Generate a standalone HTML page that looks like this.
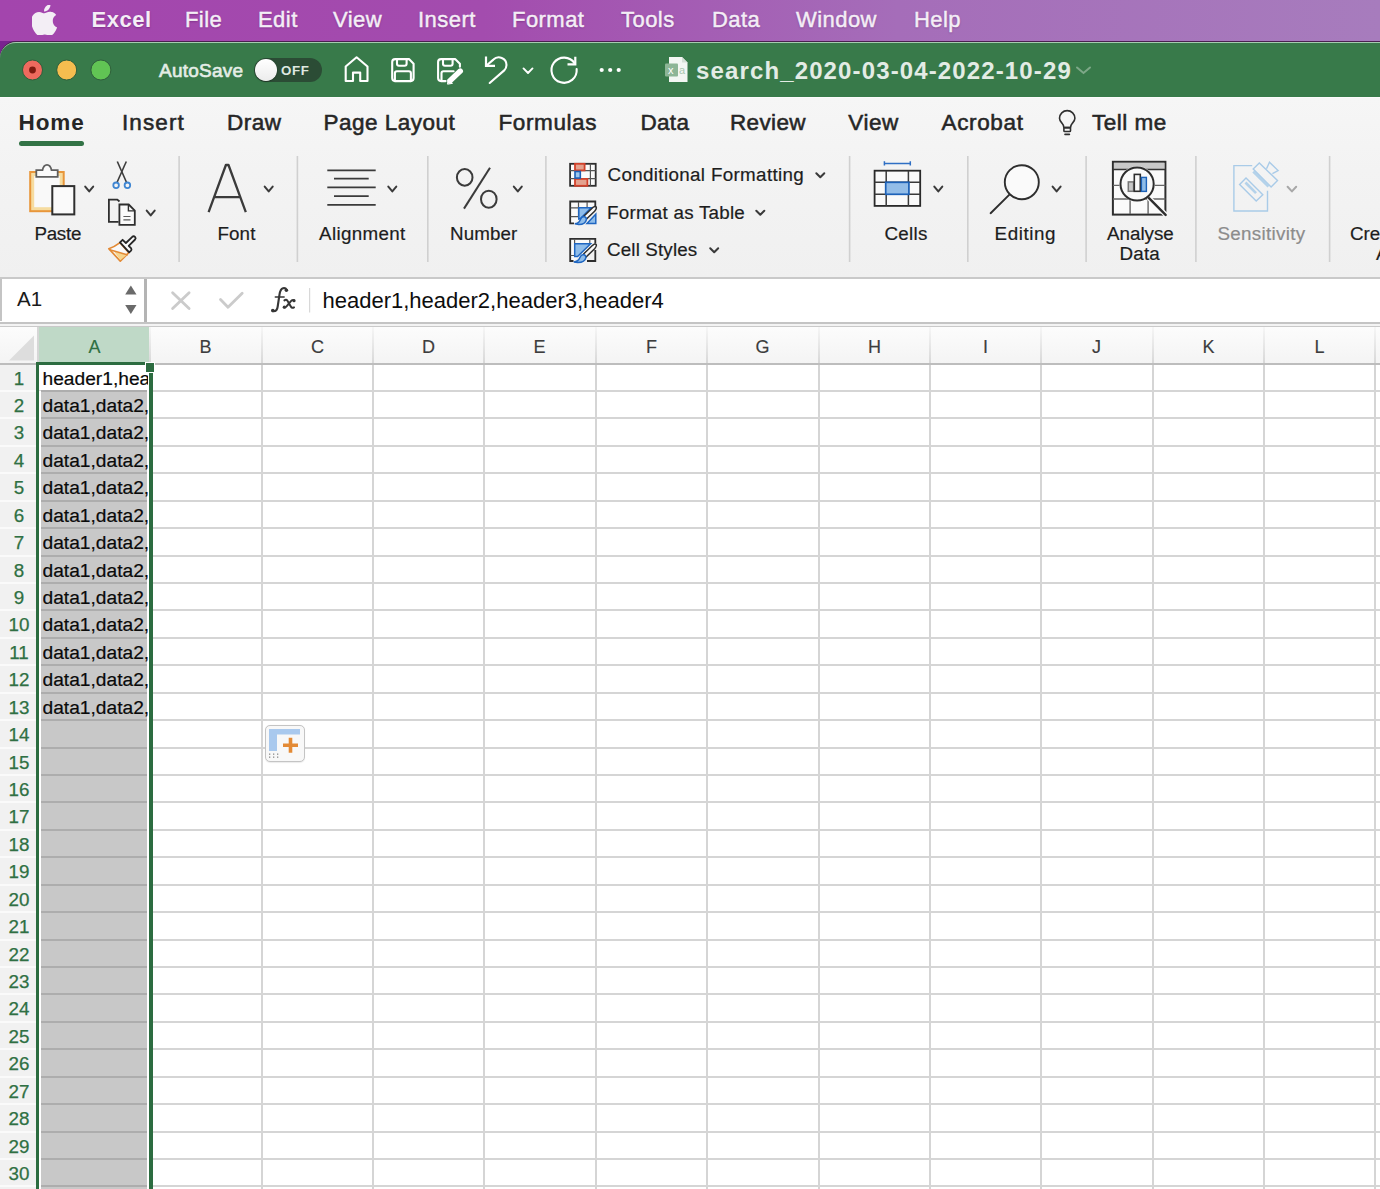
<!DOCTYPE html>
<html><head><meta charset="utf-8">
<style>
*{box-sizing:border-box;margin:0;padding:0}
html,body{width:1380px;height:1189px;overflow:hidden;background:#fff;font-family:"Liberation Sans",sans-serif;}
.a{position:absolute}
.t{position:absolute;white-space:nowrap;line-height:1}
#menubar{left:0;top:0;width:1380px;height:43px;background:linear-gradient(90deg,#a345ad 0%,#a34cae 35%,#a56db9 65%,#a77cbd 100%)}
#menubar .t{color:#f4eef6;font-size:22px;top:9px;text-shadow:0 1px 2px rgba(60,0,70,.35);-webkit-text-stroke:0.45px #f4eef6;letter-spacing:0.45px}
#titlebar{left:0;top:42px;width:1380px;height:56px;background:#387a4a;border-top-left-radius:16px;border-top:1px solid #a5cbb0;box-shadow:0 -1px 0 #4a2050}
#ribbon{left:0;top:97px;width:1380px;height:181px;background:linear-gradient(#f6f6f6,#f3f3f3 40%,#f0f0f0);border-top:1.5px solid #fbfbfb}
.tab{position:absolute;top:112px;font-size:22.5px;color:#262626;white-space:nowrap;line-height:1;-webkit-text-stroke:0.55px #262626}
.lbl{position:absolute;top:225px;font-size:18.8px;color:#1d1d1d;white-space:nowrap;line-height:1;-webkit-text-stroke:0.2px currentColor}
.sep{position:absolute;top:156px;width:1.5px;height:106px;background:#cfcfcf}
.rl{position:absolute;left:0;width:1380px;height:2px;background:#d5d5d5}
.cl{position:absolute;top:327px;width:2px;height:862px;background:#d5d5d5}
.rn{position:absolute;left:0;width:38px;text-align:center;font-size:18.8px;color:#2f7043;line-height:1;-webkit-text-stroke:0.25px #2f7043}
.ch{position:absolute;top:338px;font-size:18px;color:#4d4d4d;line-height:1;text-align:center;width:111px;-webkit-text-stroke:0.15px currentColor}
.ct{position:absolute;left:42.5px;font-size:19.2px;color:#0a0a0a;line-height:1.2;white-space:nowrap;overflow:hidden;width:105px;-webkit-text-stroke:0.2px #0a0a0a}
</style></head><body>
<!-- MENU BAR -->
<div id="menubar" class="a">
<svg class="a" style="left:31.5px;top:4.5px" width="28" height="30" viewBox="0 0 24 24" >
<g transform="translate(-1.6,0) scale(1.13)" style="transform-origin:12px 12px">
<path fill="#f3eef5" d="M12.152 6.896c-.948 0-2.415-1.078-3.96-1.04-2.04.027-3.91 1.183-4.961 3.014-2.117 3.675-.546 9.103 1.519 12.09 1.013 1.454 2.208 3.09 3.792 3.039 1.52-.065 2.09-.987 3.935-.987 1.831 0 2.35.987 3.96.948 1.637-.026 2.676-1.48 3.676-2.948 1.156-1.688 1.636-3.325 1.662-3.415-.039-.013-3.182-1.221-3.22-4.857-.026-3.04 2.48-4.494 2.597-4.559-1.429-2.09-3.623-2.324-4.39-2.376-2-.156-3.675 1.09-4.61 1.09zM15.53 3.83c.843-1.012 1.4-2.427 1.245-3.83-1.207.052-2.662.805-3.532 1.818-.78.896-1.454 2.338-1.273 3.714 1.338.104 2.715-.688 3.559-1.701"/>
</g></svg>
  <div class="t" style="left:91.5px;font-weight:bold;letter-spacing:0.5px;-webkit-text-stroke:0">Excel</div>
  <div class="t" style="left:185px;letter-spacing:0.4px">File</div>
  <div class="t" style="left:258px">Edit</div>
  <div class="t" style="left:333px">View</div>
  <div class="t" style="left:418px">Insert</div>
  <div class="t" style="left:512px">Format</div>
  <div class="t" style="left:621px">Tools</div>
  <div class="t" style="left:712px">Data</div>
  <div class="t" style="left:796px">Window</div>
  <div class="t" style="left:914px">Help</div>
</div>
<div class="a" style="left:0;top:41px;width:1380px;height:2px;background:#6b2c78"></div>
<!-- TITLE BAR -->
<div class="a" style="left:0;top:41px;width:20px;height:20px;background:#7a2390"></div>
<div id="titlebar" class="a"></div>
<!-- TITLE CONTENT -->
<svg class="a" style="left:0;top:43px" width="140" height="55">
  <circle cx="32.5" cy="27" r="10" fill="#ee6a5e" stroke="#2f5f3b" stroke-width="1"/>
  <circle cx="32.5" cy="27" r="3.4" fill="#7e1a10"/>
  <circle cx="66.7" cy="27" r="10" fill="#f5bd4f" stroke="#2f5f3b" stroke-width="1"/>
  <circle cx="100.9" cy="27" r="10" fill="#61c454" stroke="#2f5f3b" stroke-width="1"/>
</svg>
<div class="t" style="left:159px;top:61px;font-size:19px;color:#e4ede6;-webkit-text-stroke:0.65px #e4ede6;letter-spacing:0.25px">AutoSave</div>
<div class="a" style="left:254px;top:58px;width:68px;height:23.5px;border-radius:12px;background:#2b4c35"></div>
<div class="a" style="left:255px;top:59px;width:21.5px;height:21.5px;border-radius:50%;background:linear-gradient(#ffffff,#ececec);box-shadow:0 0.5px 1.5px rgba(0,0,0,.5)"></div>
<div class="t" style="left:281px;top:63.5px;font-size:13.3px;font-weight:bold;color:#dfe8e1;letter-spacing:0.6px">OFF</div>
<svg class="a" style="left:330px;top:45px" width="380" height="50" fill="none" stroke="#ffffff" stroke-width="2.1" stroke-linejoin="round" stroke-linecap="round">
  <!-- home -->
  <path d="M15.7 36 V21.5 L26.6 12.3 L37.5 21.5 V36 H30.2 V27.6 H23 V36 Z"/>
  <!-- save -->
  <path d="M65.2 14.1 H79 L83.6 18.7 V33.1 Q83.6 36.1 80.6 36.1 H65.2 Q62.2 36.1 62.2 33.1 V17.1 Q62.2 14.1 65.2 14.1 Z"/>
  <path d="M67 14.1 V18.8 Q67 20.8 69 20.8 H74.6 Q76.6 20.8 76.6 18.8 V14.1"/>
  <path d="M64.9 36.1 V28.3 Q64.9 26.3 66.9 26.3 H78.9 Q80.9 26.3 80.9 28.3 V36.1"/>
  <!-- save edit -->
  <path d="M115.6 36.1 H111.1 Q108.1 36.1 108.1 33.1 V17.1 Q108.1 14.1 111.1 14.1 H125.1 L129.9 18.7 V21.8"/>
  <path d="M113 14.1 V18.8 Q113 20.8 115 20.8 H120.6 Q122.6 20.8 122.6 18.8 V14.1"/>
  <path d="M111.5 35.6 V28.3 Q111.5 26.3 113.5 26.3 H123.6"/>
  <path d="M120 35.8 L130.3 26" stroke-width="5.4" stroke-linecap="round"/>
  <path d="M117.6 38.8 L118.2 34.2 L122.2 38.1 Z" fill="#fff" stroke-width="1"/>
  <!-- undo -->
  <path d="M156 11.5 V20.9 H165" stroke-width="2.2" stroke-linecap="butt" stroke-linejoin="miter"/>
  <path d="M156.8 20.3 L163.4 14.6 A7.7 7.7 0 0 1 176.5 20 A7.7 7.7 0 0 1 174.2 25.4 L159.7 38"/>
  <!-- chevron -->
  <path d="M193.5 23.4 L198 28 L202.5 23.4" stroke-width="1.9"/>
  <!-- redo -->
  <path d="M246.65 24.1 A12.6 12.6 0 1 1 244.67 18.34"/>
  <path d="M237.5 19.3 H245.3 V11.7" stroke-width="2.2" stroke-linecap="butt" stroke-linejoin="miter"/>
  <!-- dots -->
  <circle cx="271.7" cy="25" r="2.1" fill="#fff" stroke="none"/>
  <circle cx="280.2" cy="25" r="2.1" fill="#fff" stroke="none"/>
  <circle cx="288.7" cy="25" r="2.1" fill="#fff" stroke="none"/>
</svg>
<svg class="a" style="left:660px;top:52px" width="32" height="36">
  <path d="M9 5 H22 L27.5 10.5 V30 H9 Z" fill="#f3f6f3"/>
  <path d="M22 5 V10.5 H27.5" fill="#d5dfd7"/>
  <rect x="5" y="11.5" width="13" height="13" rx="1" fill="#8db596"/>
  <text x="8" y="22" font-family="Liberation Sans" font-size="11" fill="#ffffff">x</text>
  <text x="19" y="22" font-family="Liberation Sans" font-size="11" fill="#a9c8b0">a</text>
</svg>
<div class="t" style="left:696px;top:59px;font-size:24px;font-weight:bold;color:#e3ece5;letter-spacing:1.13px">search_2020-03-04-2022-10-29</div>
<svg class="a" style="left:1074px;top:64px" width="20" height="12"><path d="M3 3.5 L9.5 9 L16 3.5" fill="none" stroke="#7ea888" stroke-width="2" stroke-linecap="round"/></svg>

<!-- RIBBON -->
<div id="ribbon" class="a"></div>
<!-- TABS -->
<div class="tab" style="left:18.5px;font-weight:bold;-webkit-text-stroke:0;letter-spacing:0.9px">Home</div>
<div class="a" style="left:19px;top:141px;width:65px;height:4.5px;border-radius:3px;background:#337346"></div>
<div class="tab" style="left:122px;letter-spacing:1.1px">Insert</div>
<div class="tab" style="left:227px;letter-spacing:0.5px">Draw</div>
<div class="tab" style="left:323.5px;letter-spacing:0.5px">Page Layout</div>
<div class="tab" style="left:498.5px;letter-spacing:0.6px">Formulas</div>
<div class="tab" style="left:640.5px;letter-spacing:0.3px">Data</div>
<div class="tab" style="left:730px;letter-spacing:0.35px">Review</div>
<div class="tab" style="left:848.3px;letter-spacing:0.5px">View</div>
<div class="tab" style="left:941.5px;letter-spacing:0.65px">Acrobat</div>
<div class="tab" style="left:1092px;letter-spacing:0.5px">Tell me</div>
<svg class="a" style="left:1054px;top:106px" width="26" height="34" fill="none" stroke="#2f2f2f" stroke-width="1.6" stroke-linecap="round" stroke-linejoin="round">
  <path d="M9.9 21.6 Q9.7 19.2 7.9 17.1 Q5.5 14.6 5.5 12.3 A7.7 7.7 0 0 1 20.9 12.3 Q20.9 14.6 18.5 17.1 Q16.7 19.2 16.5 21.6 Z"/>
  <rect x="9.9" y="21.6" width="6.6" height="3.9" rx="0.8"/>
  <path d="M11 28.4 H15.4"/>
</svg>

<div class="a" style="left:0;top:277px;width:1380px;height:2px;background:#c9c9c9"></div>
<!-- RIBBON ICONS -->
<svg class="a" style="left:0;top:0" width="1380" height="278" fill="none" stroke-linejoin="miter">
  <!-- separators -->
  <g fill="#d0d0d0">
    <rect x="178.3" y="156" width="1.6" height="106"/>
    <rect x="296.6" y="156" width="1.6" height="106"/>
    <rect x="427" y="156" width="1.6" height="106"/>
    <rect x="545.1" y="156" width="1.6" height="106"/>
    <rect x="848.8" y="156" width="1.6" height="106"/>
    <rect x="967" y="156" width="1.6" height="106"/>
    <rect x="1085.3" y="156" width="1.6" height="106"/>
    <rect x="1195.1" y="156" width="1.6" height="106"/>
    <rect x="1328.8" y="156" width="1.6" height="106"/>
  </g>
  <!-- PASTE clipboard -->
  <rect x="30.2" y="172" width="33.5" height="39.2" fill="#f6dca0" stroke="#e8963a" stroke-width="2"/>
  <rect x="34.2" y="176" width="25.5" height="31.2" fill="#f9f9f9"/>
  <path d="M36.3 176.8 V170.2 H42.5 Q43.5 164.8 47 164.8 Q50.5 164.8 51.5 170.2 H57.7 V176.8 Z" fill="#fafafa" stroke="#5f5f5f" stroke-width="1.8"/>
  <rect x="52.3" y="186.1" width="22" height="28.3" fill="#fafafa" stroke="#2f2f2f" stroke-width="2"/>
  <!-- chevrons -->
  <g stroke="#3a3a3a" stroke-width="2" stroke-linecap="round" stroke-linejoin="round">
    <path d="M85.2 186.6 L89.2 191.4 L93.2 186.6"/>
    <path d="M146.7 210.6 L150.7 215.4 L154.7 210.6"/>
    <path d="M264.7 186.6 L268.7 191.4 L272.7 186.6"/>
    <path d="M388.3 186.6 L392.3 191.4 L396.3 186.6"/>
    <path d="M513.8 186.6 L517.8 191.4 L521.8 186.6"/>
    <path d="M816.3 173.3 L820.3 177.3 L824.3 173.3"/>
    <path d="M756.3 210.8 L760.3 214.8 L764.3 210.8"/>
    <path d="M710.2 248.3 L714.2 252.3 L718.2 248.3"/>
    <path d="M934.3 186.6 L938.3 191.4 L942.3 186.6"/>
    <path d="M1052.6 186.6 L1056.6 191.4 L1060.6 186.6"/>
  </g>
  <path d="M1287.6 186.8 L1291.9 191.4 L1296.2 186.8" stroke="#a8a8a8" stroke-width="2" stroke-linecap="round" stroke-linejoin="round"/>
  <!-- scissors -->
  <g stroke="#3c3c3c" stroke-width="1.6">
    <path d="M117.3 161.5 L126.6 182.5"/>
    <path d="M126.3 161.5 L117 182.5"/>
  </g>
  <g stroke="#3f86d2" stroke-width="1.8">
    <circle cx="116.1" cy="185.3" r="2.8"/>
    <circle cx="127.4" cy="185.3" r="2.8"/>
  </g>
  <!-- copy -->
  <path d="M118.6 221.8 H108.9 V199.6 H117.3 L119.5 201.5" stroke="#2f2f2f" stroke-width="1.8"/>
  <path d="M119.4 204.5 H128.7 L134.8 210.6 V224.9 H119.4 Z" fill="#fafafa" stroke="#2f2f2f" stroke-width="1.8"/>
  <path d="M128.4 204.6 V210.9 H134.6" stroke="#2f2f2f" stroke-width="1.4"/>
  <path d="M123.4 216.5 H130.5 M123.4 219.8 H130.5" stroke="#5a5a5a" stroke-width="1.2"/>
  <!-- format painter brush -->
  <path d="M120 242.6 Q114.5 246.8 108.8 248.7 L120.3 261.2 L128.8 252.6 Z" fill="#f9f9f9" stroke="#e38a35" stroke-width="1.7" stroke-linejoin="round"/>
  <path d="M114.2 251.6 L120.3 260.2 L126.6 255 Z" fill="#f6d58e"/>
  <path d="M109.8 249.8 L127.8 255" stroke="#e38a35" stroke-width="1.5"/>
  <path d="M120 242.3 L122.6 239.8 L125.9 243 L132.3 236.8 Q133.7 235.6 135 236.9 Q136.3 238.2 135.1 239.5 L128.7 245.9 L131.2 248.4 Q131.9 249.6 131 250.6 L129.2 252.3 Z" fill="#fafafa" stroke="#262626" stroke-width="1.8" stroke-linejoin="round"/>
  <!-- FONT A -->
  <path d="M208.6 212.2 L225.9 165 H228.5 L245.8 212.2 M214.2 197.2 H240.2" stroke="#3b3b3b" stroke-width="2.3" stroke-linejoin="round"/>
  <!-- ALIGNMENT -->
  <g stroke="#3b3b3b" stroke-width="1.7">
    <path d="M327.3 170.3 H375.7 M334 178.7 H368.7 M327.3 187.4 H375.7 M334 196.1 H368.7 M327.3 204.8 H375.7"/>
  </g>
  <!-- NUMBER % -->
  <g stroke="#3b3b3b" stroke-width="2">
    <ellipse cx="464.7" cy="177.4" rx="7.8" ry="8.3"/>
    <ellipse cx="488.8" cy="199.2" rx="7.8" ry="8.5"/>
    <path d="M464 208.6 L490 167.7"/>
  </g>
  <!-- CONDITIONAL FORMATTING icon -->
  <rect x="570.1" y="163.8" width="25.6" height="22" fill="#fafafa" stroke="#2e2e2e" stroke-width="1.8"/>
  <path d="M590.4 163.8 V185.8 M570.1 170.6 H595.7 M570.1 178.6 H595.7" stroke="#555" stroke-width="1.2"/>
  <rect x="575" y="163.8" width="9.6" height="6.6" fill="#e3a28f" stroke="#d1412a" stroke-width="1.8"/>
  <rect x="575" y="178.9" width="12.4" height="6.9" fill="#e3a28f" stroke="#d1412a" stroke-width="1.8"/>
  <rect x="575" y="171.5" width="5.3" height="6.6" fill="#9cc6ee" stroke="#1d5fb5" stroke-width="1.6"/>
  <!-- FORMAT AS TABLE icon -->
  <path d="M574 223.3 H570.2 V201.5 H595.3 V206.3" stroke="#2e2e2e" stroke-width="1.8" fill="#fafafa"/>
  <path d="M578.5 202 V216 M587.1 202 V207.5 M570.6 207.8 H578.5 M570.6 216.6 H578" stroke="#555" stroke-width="1.2"/>
  <path d="M578.8 219 V207.7 H591.2 L580.5 218.5 Z" fill="#8fbdea" stroke="#1f66c1" stroke-width="1.5"/>
  <path d="M595.8 214.2 V223.5 H587 Z" fill="#8fbdea" stroke="#1f66c1" stroke-width="1.5"/>
  <path d="M583.8 216.3 L592.6 207.7 Q595.3 205.5 596.2 207 Q596.9 208.5 594.6 211.2 L586 219.5" fill="#fafafa" stroke="#2e2e2e" stroke-width="1.5"/>
  <path d="M574.8 223.8 Q579 223.5 580.3 219.8 Q581.3 216.8 584 216.6 Q586.5 217 586.4 219.7 Q585.5 224.5 578.8 224.6 Z" fill="#8fbdea" stroke="#1f66c1" stroke-width="1.5"/>
  <!-- CELL STYLES icon -->
  <path d="M573.5 261 H570.2 V238.9 H595.3 V243.5" stroke="#2e2e2e" stroke-width="1.8" fill="#fafafa"/>
  <path d="M587 261 H595.3 V250" stroke="#2e2e2e" stroke-width="1.8"/>
  <path d="M574.6 239.2 V243.5 M589.8 239.2 V243.5 M570.6 255.5 H574" stroke="#555" stroke-width="1.2"/>
  <path d="M574.7 256.5 V243.8 H590.6 L577.6 256.5 Z" fill="#8fbdea" stroke="#1f66c1" stroke-width="1.5"/>
  <path d="M583.3 254.3 L592.6 245.3 Q595.3 243.1 596.2 244.6 Q596.9 246.1 594.6 248.8 L585.6 257.5" fill="#fafafa" stroke="#2e2e2e" stroke-width="1.5"/>
  <path d="M573.8 262 Q578.5 261.5 579.8 257.8 Q580.8 254.8 583.5 254.6 Q586 255 585.9 257.7 Q585 262.5 577.8 262.6 Z" fill="#8fbdea" stroke="#1f66c1" stroke-width="1.5"/>
  <!-- CELLS icon -->
  <rect x="874.6" y="170.7" width="45.6" height="35.2" fill="#fafafa" stroke="#2a2a2a" stroke-width="1.8"/>
  <path d="M886.2 170.7 V205.9 M908.4 170.7 V205.9 M874.6 182.3 H920.2 M874.6 194.3 H920.2" stroke="#3a3a3a" stroke-width="1.5"/>
  <rect x="885.7" y="182.3" width="23.2" height="12" fill="#93bde8" stroke="#1d62b8" stroke-width="1.7"/>
  <path d="M884.4 163.4 H910.3 M884.4 161.3 V165.6 M910.3 161.3 V165.6" stroke="#2f6fc4" stroke-width="1.5"/>
  <!-- EDITING magnifier -->
  <circle cx="1021.8" cy="182.2" r="17" fill="#fafafa" stroke="#2e2e2e" stroke-width="1.9"/>
  <path d="M1009.4 194.6 L990.6 213.2" stroke="#2e2e2e" stroke-width="1.9" stroke-linecap="round"/>
  <!-- ANALYSE DATA icon -->
  <rect x="1112.9" y="161.8" width="52.5" height="52.8" fill="#fafafa" stroke="#2e2e2e" stroke-width="2"/>
  <rect x="1113.9" y="162.8" width="50.5" height="6.4" fill="#c9c9c9"/>
  <path d="M1113 169.5 H1165.4" stroke="#333" stroke-width="1.5"/>
  <path d="M1113 185.4 H1165.4 M1113 199 H1165.4 M1130.1 199 V214 M1148.1 199 V214" stroke="#666" stroke-width="1.4"/>
  <circle cx="1137.1" cy="184" r="17.8" fill="#fafafa"/>
  <path d="M1148.5 197.5 L1166.2 215.2" stroke="#fafafa" stroke-width="5"/>
  <circle cx="1137.1" cy="184" r="16.6" fill="#fafafa" stroke="#2e2e2e" stroke-width="2"/>
  <path d="M1149 198.2 L1165.6 214.9" stroke="#2e2e2e" stroke-width="2.4" stroke-linecap="round"/>
  <rect x="1128.3" y="181.9" width="5.3" height="9.4" fill="#c8c8c8" stroke="#777" stroke-width="1.5"/>
  <rect x="1134.3" y="174.4" width="6" height="16.9" fill="#fafafa" stroke="#2e2e2e" stroke-width="1.6"/>
  <rect x="1141.4" y="177.4" width="5" height="14" fill="#8fbde8" stroke="#1d62b8" stroke-width="1.4"/>
  <!-- SENSITIVITY icon -->
  <g stroke="#a9cbe8" stroke-width="1.4" fill="none">
    <path d="M1252.2 165.6 H1233.9 V211 H1267.5 V190.7"/>
    <path d="M1239.6 184.4 L1246 178 L1262.8 194.8 L1256.2 201.1 Z"/>
    <path d="M1253.2 169 L1259.3 163 L1277.5 180.6 L1271.1 187 Z"/>
    <path d="M1266.5 168.8 L1269.5 162.3 L1278.1 170.5 L1272.4 173.6"/>
  </g>
  <path d="M1244.5 183.5 L1246.4 181.6 L1257 192.2 L1255.1 194.1 Z" fill="#b4d2ea"/>
  <path d="M1252.3 172.6 L1254.3 170.6 L1269.6 185.4 L1267.5 187.5 Z" fill="#b4d2ea"/>
</svg>
<div class="lbl" style="left:34.5px;letter-spacing:-0.3px">Paste</div>
<div class="lbl" style="left:217.5px;letter-spacing:0.1px">Font</div>
<div class="lbl" style="left:319px;letter-spacing:0.35px">Alignment</div>
<div class="lbl" style="left:450px;letter-spacing:0.1px">Number</div>
<div class="lbl" style="left:884.5px;letter-spacing:0.3px">Cells</div>
<div class="lbl" style="left:994.5px;letter-spacing:0.6px">Editing</div>
<div class="lbl" style="left:1107px;letter-spacing:0px">Analyse</div>
<div class="lbl" style="left:1119.5px;top:245px;letter-spacing:0.2px">Data</div>
<div class="lbl" style="left:1217.5px;color:#8c8c8c;letter-spacing:0.3px">Sensitivity</div>
<div class="lbl" style="left:1350px">Cre</div>
<div class="lbl" style="left:1376px;top:245px">A</div>
<div class="lbl" style="left:607.5px;top:166px;letter-spacing:0.35px">Conditional Formatting</div>
<div class="lbl" style="left:607px;top:203.5px;letter-spacing:0.25px">Format as Table</div>
<div class="lbl" style="left:607px;top:241px;letter-spacing:0.15px">Cell Styles</div>
<!-- /RIBBON ICONS -->
<!-- FORMULA BAR -->
<div class="a" style="left:0;top:279px;width:1380px;height:43px;background:#fff"></div>
<div class="a" style="left:144.3px;top:279px;width:2.3px;height:43px;background:#b4b4b4"></div>
<div class="a" style="left:0;top:279px;width:1.5px;height:42px;background:#c4c4c4"></div>
<div class="a" style="left:0;top:322px;width:1380px;height:2px;background:#c4c4c4"></div>
<div class="a" style="left:0;top:324px;width:1380px;height:2px;background:#f3f3f3"></div>
<div class="a" style="left:0;top:326px;width:1380px;height:1px;background:#c9c9c9"></div>
<svg class="a" style="left:0;top:278px" width="330" height="46">
  <path d="M125.2 16.5 L130.85 7.4 L136.5 16.5 Z" fill="#6a6a6a"/>
  <path d="M125.2 27 L130.85 36 L136.5 27 Z" fill="#6a6a6a"/>
  <path d="M172.6 14.7 L189.1 30.6 M189.1 14.7 L172.6 30.6" stroke="#cbcbcb" stroke-width="2.8" stroke-linecap="round"/>
  <path d="M220.5 21.5 L228 29.3 L242.2 15.2" stroke="#cbcbcb" stroke-width="2.8" fill="none" stroke-linecap="round" stroke-linejoin="round"/>
  <g transform="translate(0,-278)" stroke="#363636" fill="none" stroke-linecap="round">
    <path d="M286.6 289.9 Q285.6 287.6 283 288.2 Q280.3 289 279.5 294.5 L277.7 306.5 Q277.1 311.3 273.6 311.3 Q272.2 311.2 272.3 310.4" stroke-width="2.1"/>
    <circle cx="286.4" cy="290.3" r="1.75" fill="#363636" stroke="none"/>
    <circle cx="272.9" cy="310.6" r="1.75" fill="#363636" stroke="none"/>
    <path d="M275.3 297.1 H284.1" stroke-width="1.5"/>
    <path d="M284.4 300.4 Q286.3 298.9 287.6 301 L290.8 306.4 Q292 308.6 294 307.4" stroke-width="2"/>
    <path d="M294 300.3 Q292.3 299.4 290.3 301.8 L286.8 306 Q285.3 308 284.2 307.2" stroke-width="2"/>
    <circle cx="294" cy="300.7" r="1.6" fill="#363636" stroke="none"/>
    <circle cx="284.3" cy="307.2" r="1.6" fill="#363636" stroke="none"/>
  </g>
  <rect x="309" y="10" width="1.2" height="24.5" fill="#d8d8d8"/>
</svg>
<div class="t" style="left:17px;top:289px;font-size:20.5px;color:#1a1a1a">A1</div>
<div class="t" style="left:322.5px;top:289.7px;font-size:22px;color:#0d0d0d">header1,header2,header3,header4</div>
<!-- GRID -->
<div id="grid"><div class="a" style="left:0;top:327px;width:1380px;height:36px;background:linear-gradient(#fcfcfc,#f4f4f4)"></div>
<div class="a" style="left:0;top:363px;width:38px;height:826px;background:#f1f1f1"></div>
<svg class="a" style="left:0;top:327px" width="38" height="36"><polygon points="9,33.5 34,8.5 34,33.5" fill="#dddddd"/></svg>
<div class="a" style="left:39px;top:327px;width:111px;height:36px;background:#bfd9c7"></div>
<div class="a" style="left:149px;top:327px;width:2px;height:36px;background:linear-gradient(#f6f6f6,#d8d8d8)"></div>
<div class="cl" style="left:149px;top:363px"></div>
<div class="a" style="left:261px;top:327px;width:2px;height:36px;background:linear-gradient(#f6f6f6,#d8d8d8)"></div>
<div class="cl" style="left:261px;top:363px"></div>
<div class="a" style="left:372px;top:327px;width:2px;height:36px;background:linear-gradient(#f6f6f6,#d8d8d8)"></div>
<div class="cl" style="left:372px;top:363px"></div>
<div class="a" style="left:483px;top:327px;width:2px;height:36px;background:linear-gradient(#f6f6f6,#d8d8d8)"></div>
<div class="cl" style="left:483px;top:363px"></div>
<div class="a" style="left:595px;top:327px;width:2px;height:36px;background:linear-gradient(#f6f6f6,#d8d8d8)"></div>
<div class="cl" style="left:595px;top:363px"></div>
<div class="a" style="left:706px;top:327px;width:2px;height:36px;background:linear-gradient(#f6f6f6,#d8d8d8)"></div>
<div class="cl" style="left:706px;top:363px"></div>
<div class="a" style="left:818px;top:327px;width:2px;height:36px;background:linear-gradient(#f6f6f6,#d8d8d8)"></div>
<div class="cl" style="left:818px;top:363px"></div>
<div class="a" style="left:929px;top:327px;width:2px;height:36px;background:linear-gradient(#f6f6f6,#d8d8d8)"></div>
<div class="cl" style="left:929px;top:363px"></div>
<div class="a" style="left:1040px;top:327px;width:2px;height:36px;background:linear-gradient(#f6f6f6,#d8d8d8)"></div>
<div class="cl" style="left:1040px;top:363px"></div>
<div class="a" style="left:1152px;top:327px;width:2px;height:36px;background:linear-gradient(#f6f6f6,#d8d8d8)"></div>
<div class="cl" style="left:1152px;top:363px"></div>
<div class="a" style="left:1263px;top:327px;width:2px;height:36px;background:linear-gradient(#f6f6f6,#d8d8d8)"></div>
<div class="cl" style="left:1263px;top:363px"></div>
<div class="a" style="left:1374px;top:327px;width:2px;height:36px;background:linear-gradient(#f6f6f6,#d8d8d8)"></div>
<div class="cl" style="left:1374px;top:363px"></div>
<div class="a" style="left:37px;top:327px;width:1.5px;height:36px;background:#d6d6d6"></div>
<div class="a" style="left:0;top:363px;width:1380px;height:2px;background:#bdbdbd"></div>
<div class="rl" style="top:390px;left:38px;width:1342px"></div>
<div class="a" style="top:390px;left:0;width:36px;height:2px;background:#fafafa"></div>
<div class="rl" style="top:417px;left:38px;width:1342px"></div>
<div class="a" style="top:417px;left:0;width:36px;height:2px;background:#fafafa"></div>
<div class="rl" style="top:445px;left:38px;width:1342px"></div>
<div class="a" style="top:445px;left:0;width:36px;height:2px;background:#fafafa"></div>
<div class="rl" style="top:472px;left:38px;width:1342px"></div>
<div class="a" style="top:472px;left:0;width:36px;height:2px;background:#fafafa"></div>
<div class="rl" style="top:500px;left:38px;width:1342px"></div>
<div class="a" style="top:500px;left:0;width:36px;height:2px;background:#fafafa"></div>
<div class="rl" style="top:527px;left:38px;width:1342px"></div>
<div class="a" style="top:527px;left:0;width:36px;height:2px;background:#fafafa"></div>
<div class="rl" style="top:555px;left:38px;width:1342px"></div>
<div class="a" style="top:555px;left:0;width:36px;height:2px;background:#fafafa"></div>
<div class="rl" style="top:582px;left:38px;width:1342px"></div>
<div class="a" style="top:582px;left:0;width:36px;height:2px;background:#fafafa"></div>
<div class="rl" style="top:609px;left:38px;width:1342px"></div>
<div class="a" style="top:609px;left:0;width:36px;height:2px;background:#fafafa"></div>
<div class="rl" style="top:637px;left:38px;width:1342px"></div>
<div class="a" style="top:637px;left:0;width:36px;height:2px;background:#fafafa"></div>
<div class="rl" style="top:664px;left:38px;width:1342px"></div>
<div class="a" style="top:664px;left:0;width:36px;height:2px;background:#fafafa"></div>
<div class="rl" style="top:692px;left:38px;width:1342px"></div>
<div class="a" style="top:692px;left:0;width:36px;height:2px;background:#fafafa"></div>
<div class="rl" style="top:719px;left:38px;width:1342px"></div>
<div class="a" style="top:719px;left:0;width:36px;height:2px;background:#fafafa"></div>
<div class="rl" style="top:747px;left:38px;width:1342px"></div>
<div class="a" style="top:747px;left:0;width:36px;height:2px;background:#fafafa"></div>
<div class="rl" style="top:774px;left:38px;width:1342px"></div>
<div class="a" style="top:774px;left:0;width:36px;height:2px;background:#fafafa"></div>
<div class="rl" style="top:801px;left:38px;width:1342px"></div>
<div class="a" style="top:801px;left:0;width:36px;height:2px;background:#fafafa"></div>
<div class="rl" style="top:829px;left:38px;width:1342px"></div>
<div class="a" style="top:829px;left:0;width:36px;height:2px;background:#fafafa"></div>
<div class="rl" style="top:856px;left:38px;width:1342px"></div>
<div class="a" style="top:856px;left:0;width:36px;height:2px;background:#fafafa"></div>
<div class="rl" style="top:884px;left:38px;width:1342px"></div>
<div class="a" style="top:884px;left:0;width:36px;height:2px;background:#fafafa"></div>
<div class="rl" style="top:911px;left:38px;width:1342px"></div>
<div class="a" style="top:911px;left:0;width:36px;height:2px;background:#fafafa"></div>
<div class="rl" style="top:939px;left:38px;width:1342px"></div>
<div class="a" style="top:939px;left:0;width:36px;height:2px;background:#fafafa"></div>
<div class="rl" style="top:966px;left:38px;width:1342px"></div>
<div class="a" style="top:966px;left:0;width:36px;height:2px;background:#fafafa"></div>
<div class="rl" style="top:993px;left:38px;width:1342px"></div>
<div class="a" style="top:993px;left:0;width:36px;height:2px;background:#fafafa"></div>
<div class="rl" style="top:1021px;left:38px;width:1342px"></div>
<div class="a" style="top:1021px;left:0;width:36px;height:2px;background:#fafafa"></div>
<div class="rl" style="top:1048px;left:38px;width:1342px"></div>
<div class="a" style="top:1048px;left:0;width:36px;height:2px;background:#fafafa"></div>
<div class="rl" style="top:1076px;left:38px;width:1342px"></div>
<div class="a" style="top:1076px;left:0;width:36px;height:2px;background:#fafafa"></div>
<div class="rl" style="top:1103px;left:38px;width:1342px"></div>
<div class="a" style="top:1103px;left:0;width:36px;height:2px;background:#fafafa"></div>
<div class="rl" style="top:1131px;left:38px;width:1342px"></div>
<div class="a" style="top:1131px;left:0;width:36px;height:2px;background:#fafafa"></div>
<div class="rl" style="top:1158px;left:38px;width:1342px"></div>
<div class="a" style="top:1158px;left:0;width:36px;height:2px;background:#fafafa"></div>
<div class="rl" style="top:1185px;left:38px;width:1342px"></div>
<div class="a" style="top:1185px;left:0;width:36px;height:2px;background:#fafafa"></div>
<div class="ch" style="left:39px;color:#2f7043">A</div>
<div class="ch" style="left:150px;color:#3d3d3d">B</div>
<div class="ch" style="left:262px;color:#3d3d3d">C</div>
<div class="ch" style="left:373px;color:#3d3d3d">D</div>
<div class="ch" style="left:484px;color:#3d3d3d">E</div>
<div class="ch" style="left:596px;color:#3d3d3d">F</div>
<div class="ch" style="left:707px;color:#3d3d3d">G</div>
<div class="ch" style="left:819px;color:#3d3d3d">H</div>
<div class="ch" style="left:930px;color:#3d3d3d">I</div>
<div class="ch" style="left:1041px;color:#3d3d3d">J</div>
<div class="ch" style="left:1153px;color:#3d3d3d">K</div>
<div class="ch" style="left:1264px;color:#3d3d3d">L</div>
<div class="a" style="left:41px;top:390px;width:106px;height:27px;background:#c8c8c8;border-top:2px solid #adadad"></div>
<div class="a" style="left:41px;top:417px;width:106px;height:28px;background:#c8c8c8;border-top:2px solid #adadad"></div>
<div class="a" style="left:41px;top:445px;width:106px;height:27px;background:#c8c8c8;border-top:2px solid #adadad"></div>
<div class="a" style="left:41px;top:472px;width:106px;height:28px;background:#c8c8c8;border-top:2px solid #adadad"></div>
<div class="a" style="left:41px;top:500px;width:106px;height:27px;background:#c8c8c8;border-top:2px solid #adadad"></div>
<div class="a" style="left:41px;top:527px;width:106px;height:28px;background:#c8c8c8;border-top:2px solid #adadad"></div>
<div class="a" style="left:41px;top:555px;width:106px;height:27px;background:#c8c8c8;border-top:2px solid #adadad"></div>
<div class="a" style="left:41px;top:582px;width:106px;height:27px;background:#c8c8c8;border-top:2px solid #adadad"></div>
<div class="a" style="left:41px;top:609px;width:106px;height:28px;background:#c8c8c8;border-top:2px solid #adadad"></div>
<div class="a" style="left:41px;top:637px;width:106px;height:27px;background:#c8c8c8;border-top:2px solid #adadad"></div>
<div class="a" style="left:41px;top:664px;width:106px;height:28px;background:#c8c8c8;border-top:2px solid #adadad"></div>
<div class="a" style="left:41px;top:692px;width:106px;height:27px;background:#c8c8c8;border-top:2px solid #adadad"></div>
<div class="a" style="left:41px;top:719px;width:106px;height:28px;background:#c8c8c8;border-top:2px solid #adadad"></div>
<div class="a" style="left:41px;top:747px;width:106px;height:27px;background:#c8c8c8;border-top:2px solid #adadad"></div>
<div class="a" style="left:41px;top:774px;width:106px;height:27px;background:#c8c8c8;border-top:2px solid #adadad"></div>
<div class="a" style="left:41px;top:801px;width:106px;height:28px;background:#c8c8c8;border-top:2px solid #adadad"></div>
<div class="a" style="left:41px;top:829px;width:106px;height:27px;background:#c8c8c8;border-top:2px solid #adadad"></div>
<div class="a" style="left:41px;top:856px;width:106px;height:28px;background:#c8c8c8;border-top:2px solid #adadad"></div>
<div class="a" style="left:41px;top:884px;width:106px;height:27px;background:#c8c8c8;border-top:2px solid #adadad"></div>
<div class="a" style="left:41px;top:911px;width:106px;height:28px;background:#c8c8c8;border-top:2px solid #adadad"></div>
<div class="a" style="left:41px;top:939px;width:106px;height:27px;background:#c8c8c8;border-top:2px solid #adadad"></div>
<div class="a" style="left:41px;top:966px;width:106px;height:27px;background:#c8c8c8;border-top:2px solid #adadad"></div>
<div class="a" style="left:41px;top:993px;width:106px;height:28px;background:#c8c8c8;border-top:2px solid #adadad"></div>
<div class="a" style="left:41px;top:1021px;width:106px;height:27px;background:#c8c8c8;border-top:2px solid #adadad"></div>
<div class="a" style="left:41px;top:1048px;width:106px;height:28px;background:#c8c8c8;border-top:2px solid #adadad"></div>
<div class="a" style="left:41px;top:1076px;width:106px;height:27px;background:#c8c8c8;border-top:2px solid #adadad"></div>
<div class="a" style="left:41px;top:1103px;width:106px;height:28px;background:#c8c8c8;border-top:2px solid #adadad"></div>
<div class="a" style="left:41px;top:1131px;width:106px;height:27px;background:#c8c8c8;border-top:2px solid #adadad"></div>
<div class="a" style="left:41px;top:1158px;width:106px;height:27px;background:#c8c8c8;border-top:2px solid #adadad"></div>
<div class="a" style="left:41px;top:1185px;width:106px;height:27px;background:#c8c8c8;border-top:2px solid #adadad"></div>
<div class="a" style="left:39px;top:391px;width:2px;height:798px;background:#fff"></div>
<div class="a" style="left:147px;top:373px;width:2.2px;height:816px;background:#fff"></div>
<div class="rn" style="top:370.2px">1</div>
<div class="rn" style="top:397.2px">2</div>
<div class="rn" style="top:424.2px">3</div>
<div class="rn" style="top:452.2px">4</div>
<div class="rn" style="top:479.2px">5</div>
<div class="rn" style="top:507.2px">6</div>
<div class="rn" style="top:534.2px">7</div>
<div class="rn" style="top:562.2px">8</div>
<div class="rn" style="top:589.2px">9</div>
<div class="rn" style="top:616.2px">10</div>
<div class="rn" style="top:644.2px">11</div>
<div class="rn" style="top:671.2px">12</div>
<div class="rn" style="top:699.2px">13</div>
<div class="rn" style="top:726.2px">14</div>
<div class="rn" style="top:754.2px">15</div>
<div class="rn" style="top:781.2px">16</div>
<div class="rn" style="top:808.2px">17</div>
<div class="rn" style="top:836.2px">18</div>
<div class="rn" style="top:863.2px">19</div>
<div class="rn" style="top:891.2px">20</div>
<div class="rn" style="top:918.2px">21</div>
<div class="rn" style="top:946.2px">22</div>
<div class="rn" style="top:973.2px">23</div>
<div class="rn" style="top:1000.2px">24</div>
<div class="rn" style="top:1028.2px">25</div>
<div class="rn" style="top:1055.2px">26</div>
<div class="rn" style="top:1083.2px">27</div>
<div class="rn" style="top:1110.2px">28</div>
<div class="rn" style="top:1138.2px">29</div>
<div class="rn" style="top:1165.2px">30</div>
<div class="ct" style="top:367.4px">header1,hea</div>
<div class="ct" style="top:394.2px">data1,data2,</div>
<div class="ct" style="top:421.2px">data1,data2,</div>
<div class="ct" style="top:449.2px">data1,data2,</div>
<div class="ct" style="top:476.2px">data1,data2,</div>
<div class="ct" style="top:504.2px">data1,data2,</div>
<div class="ct" style="top:531.2px">data1,data2,</div>
<div class="ct" style="top:559.2px">data1,data2,</div>
<div class="ct" style="top:586.2px">data1,data2,</div>
<div class="ct" style="top:613.2px">data1,data2,</div>
<div class="ct" style="top:641.2px">data1,data2,</div>
<div class="ct" style="top:668.2px">data1,data2,</div>
<div class="ct" style="top:696.2px">data1,data2,</div>
<div class="a" style="left:36px;top:363px;width:3.3px;height:826px;background:#2c6c40"></div>
<div class="a" style="left:149.2px;top:373px;width:3.5px;height:816px;background:#2c6c40"></div>
<div class="a" style="left:36px;top:362px;width:113px;height:3px;background:#2c6c40"></div>
<div class="a" style="left:146px;top:363px;width:8px;height:8.5px;background:#2c6c40;box-shadow:0 0 0 1px #fff"></div></div><!--endgrid-->
<!-- QUICK ANALYSIS -->
<div class="a" style="left:264.5px;top:725px;width:40.5px;height:36.5px;border-radius:5px;background:#f8f8f8;border:1.5px solid #c4c4c4;box-shadow:0 0.5px 1px rgba(0,0,0,.08)"></div>
<svg class="a" style="left:264px;top:725px" width="42" height="38">
  <path d="M5 4 H36 V9.5 H13 V26 H5 Z" fill="#a9c9ee"/>
  <path d="M19 20.2 H34 M26.5 12.7 V27.7" stroke="#e38a35" stroke-width="3.6"/>
  <g fill="#8a8a8a"><rect x="5" y="28.5" width="1.3" height="1.3"/><rect x="9" y="28.5" width="1.3" height="1.3"/><rect x="13" y="28.5" width="1.3" height="1.3"/><rect x="5" y="31.5" width="1.3" height="1.3"/><rect x="9" y="31.5" width="1.3" height="1.3"/><rect x="13" y="31.5" width="1.3" height="1.3"/></g>
</svg>
</body></html>
